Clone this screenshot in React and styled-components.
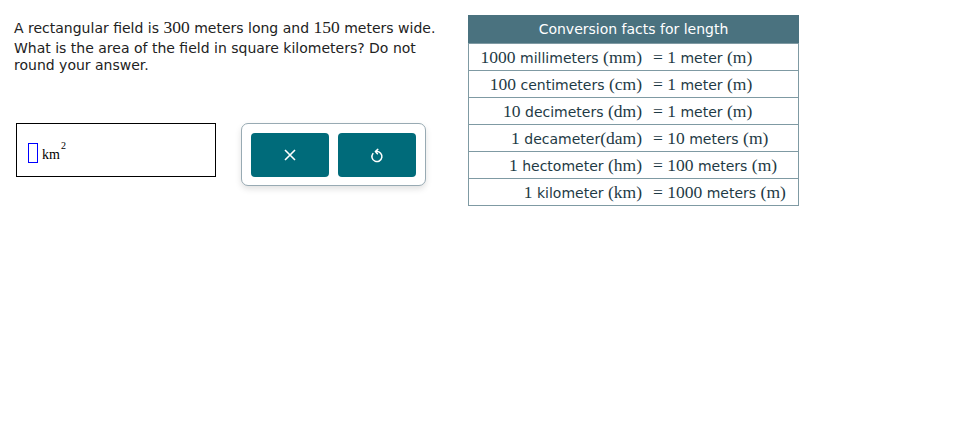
import styled, { createGlobalStyle } from 'styled-components';

const GlobalStyle = createGlobalStyle`
    body {
        margin: 0;
        background: #fff;
        font-family: Verdana, "DejaVu Sans", sans-serif;
        color: #222;
    }
`;

const rows = [
    { qty: '1000', unit: 'millimeters', abbr: 'mm', eq: '1', to: 'meter' },
    { qty: '100', unit: 'centimeters', abbr: 'cm', eq: '1', to: 'meter' },
    { qty: '10', unit: 'decimeters', abbr: 'dm', eq: '1', to: 'meter' },
    { qty: '1', unit: 'decameter', abbr: 'dam', eq: '10', to: 'meters', tight: true },
    { qty: '1', unit: 'hectometer', abbr: 'hm', eq: '100', to: 'meters' },
    { qty: '1', unit: 'kilometer', abbr: 'km', eq: '1000', to: 'meters' },
];

const App = () => (
    <>
        <GlobalStyle />
        <Page>
            <Left>
                <Question>
                    <FirstLine>
                        A rectangular field is <M>300</M> meters long and <M>150</M> meters wide.
                    </FirstLine>
                    What is the area of the field in square kilometers? Do not round your answer.
                </Question>
                <AnswerRow>
                    <AnswerBox>
                        <Blank />
                        <Unit>
                            km<sup>2</sup>
                        </Unit>
                    </AnswerBox>
                    <ButtonPanel>
                        <ActionButton aria-label="Clear">
                            <svg width="14" height="14" viewBox="0 0 14 14">
                                <path d="M2 2 L12 12 M12 2 L2 12" stroke="#fff" strokeWidth="1.6" fill="none" />
                            </svg>
                        </ActionButton>
                        <ActionButton aria-label="Undo">
                            <svg width="14" height="16" viewBox="0 0 14 16">
                                <path
                                    d="M6.6 4.6 A5 5 0 1 1 2.9 6.6"
                                    stroke="#fff"
                                    strokeWidth="1.5"
                                    fill="none"
                                    strokeLinecap="round"
                                />
                                <path
                                    d="M7.8 2.4 L5.4 4.6 L7.4 6.8"
                                    stroke="#fff"
                                    strokeWidth="1.5"
                                    fill="none"
                                    strokeLinecap="round"
                                    strokeLinejoin="round"
                                />
                            </svg>
                        </ActionButton>
                    </ButtonPanel>
                </AnswerRow>
            </Left>
            <Table>
                <HeaderCell>Conversion facts for length</HeaderCell>
                {rows.map((r) => (
                    <Row key={r.unit}>
                        <LeftSide>
                            <M>{r.qty}</M> {r.unit}
                            {r.tight ? '' : ' '}
                            <M>({r.abbr})</M>
                        </LeftSide>
                        <RightSide>
                            <M>= {r.eq}</M> {r.to} <M>(m)</M>
                        </RightSide>
                    </Row>
                ))}
            </Table>
        </Page>
    </>
);

export default App;

const Page = styled.div`
    display: flex;
    align-items: flex-start;
    padding: 15px 0 0 14px;
`;

const Left = styled.div`
    width: 440px;
    display: flex;
    flex-direction: column;
`;

const Question = styled.p`
    margin: 0;
    padding-top: 1px;
    font-size: 14px;
    line-height: 17px;
    width: 430px;
    color: #222;
`;

const FirstLine = styled.span`
    display: block;
    line-height: 22px;
    margin-bottom: 1px;
`;

const M = styled.span`
    font-family: "Liberation Serif", "Times New Roman", serif;
    font-size: 17.5px;
`;

const AnswerRow = styled.div`
    display: flex;
    align-items: flex-start;
    gap: 25px;
    margin-top: 49px;
    margin-left: 2px;
`;

const AnswerBox = styled.div`
    width: 187px;
    height: 46px;
    border: 1px solid #000;
    display: flex;
    align-items: center;
    padding: 6px 0 0 11px;
    box-sizing: content-box;
`;

const Blank = styled.span`
    display: inline-block;
    width: 8px;
    height: 18px;
    border: 1px solid #0000ff;
`;

const Unit = styled.span`
    margin-left: 4px;
    font-family: "Liberation Serif", "Times New Roman", serif;
    font-size: 14px;
    color: #000;

    sup {
        font-size: 10px;
        position: relative;
        top: -4px;
        margin-left: 1px;
    }
`;

const ButtonPanel = styled.div`
    display: flex;
    gap: 9px;
    padding: 9px 9px 8px 9px;
    border: 1px solid #98aab3;
    border-radius: 7px;
    background: #fff;
    box-shadow: 0 3px 6px rgba(0, 0, 0, 0.12);
`;

const ActionButton = styled.button`
    width: 78px;
    height: 44px;
    border: none;
    border-radius: 4px;
    background: #006b7a;
    display: flex;
    align-items: center;
    justify-content: center;
    padding: 0;
    cursor: pointer;
`;

const Table = styled.div`
    margin-left: 14px;
    width: 329px;
    border: 1px solid #7f9aa3;
    border-top: none;
`;

const HeaderCell = styled.div`
    height: 28px;
    background: #4a727f;
    color: #fff;
    font-size: 14px;
    display: flex;
    align-items: center;
    justify-content: center;
    margin: 0 -1px;
`;

const Row = styled.div`
    display: grid;
    grid-template-columns: 173px 1fr;
    height: 26px;
    align-items: center;
    font-size: 14px;
    color: #1e3a45;
    border-top: 1px solid #7f9aa3;
    &:first-of-type {
        border-top: none;
    }
`;

const LeftSide = styled.div`
    text-align: right;
    white-space: nowrap;
`;

const RightSide = styled.div`
    padding-left: 11px;
    white-space: nowrap;
`;
